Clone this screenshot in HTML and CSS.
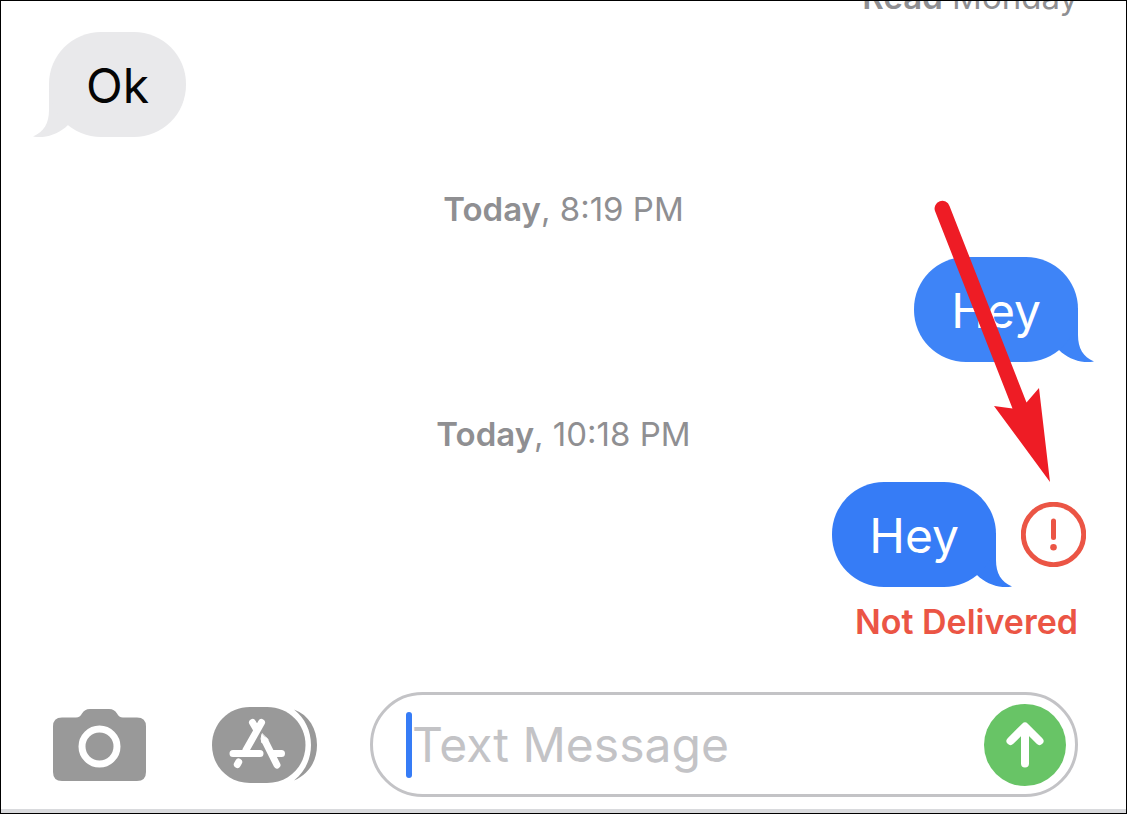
FILE: index.html
```html
<!DOCTYPE html>
<html lang="en">
<head>
<meta charset="utf-8">
<meta name="viewport" content="width=device-width, initial-scale=1">
<title>Messages</title>
<link rel="stylesheet" href="styles.css">
</head>
<body>
<div class="screen">
  <main class="thread">
    <p class="receipt"><strong>Read</strong> Monday</p>

    <div class="message message-received">
      <div class="bubble">Ok
        <svg class="tail" viewBox="0 0 46 54" aria-hidden="true"><path d="M16 0V27C16 40 11 49 0 53.500C12 56 26 51 35 42L46 30V0Z"/></svg>
      </div>
    </div>

    <p class="timestamp"><strong>Today</strong>, 8:19 PM</p>

    <div class="message message-sent">
      <div class="bubble">Hey
        <svg class="tail" viewBox="0 0 46 54" aria-hidden="true"><path d="M30 0V27C30 40 35 49 46 53.500C34 56 20 51 11 42L0 30V0Z"/></svg>
      </div>
    </div>

    <p class="timestamp"><strong>Today</strong>, 10:18 PM</p>

    <div class="message message-sent message-failed">
      <div class="bubble">Hey
        <svg class="tail" viewBox="0 0 46 54" aria-hidden="true"><path d="M30 0V27C30 40 35 49 46 53.500C34 56 20 51 11 42L0 30V0Z"/></svg>
      </div>
      <button class="alert" type="button" aria-label="Message not delivered">
        <svg viewBox="0 0 65 65" aria-hidden="true"><circle cx="32.500" cy="32.500" r="30.200"/><path d="M32.500 19V35.500"/><circle class="dot" cx="32.500" cy="45.300" r="3.300"/></svg>
      </button>
      <svg class="pointer" viewBox="930 198 125 290" aria-hidden="true"><path d="M935 211A7.500 7.500 0 0 1 949.500 206L1026.500 402.500L1039 388L1050 482L994 406L1012.500 408.500Z"/></svg>
    </div>
    <p class="receipt receipt-error">Not Delivered</p>
  </main>

  <form class="composer">
    <button class="tool camera" type="button" aria-label="Camera">
      <svg viewBox="0 0 93 72" aria-hidden="true">
        <path d="M9 8.500H23C26 8.500 27.500 7 29 4.500C31 1.500 33 0 37 0H56C60 0 62 1.500 64 4.500C65.500 7 67 8.500 70 8.500H84Q93 8.500 93 17.500V63Q93 72 84 72H9Q0 72 0 63V17.500Q0 8.500 9 8.500Z"/>
        <circle cx="46.500" cy="37.500" r="17.500"/>
      </svg>
    </button>
    <button class="tool apps" type="button" aria-label="Apps">
      <svg viewBox="212 707 105 76" aria-hidden="true">
        <path d="M250 707H267C289 707 305.500 724 305.500 745S289 783 267 783H250C228 783 212 766 212 745S228 707 250 707Z"/>
        <path d="M294 709.500C309 715 317 729 317 745C317 761 309 774 294 780.500C305 772 311 759 311 745C311 731 305 718 294 709.500Z"/>
        <g class="glyph">
          <path d="M261.500 722.500L246 750M252.500 722.500L256 728.500M233 753.500H260M274 753.500H281.500M265 741L277 765M238.700 762L237.300 764.500"/>
          <path class="taper" d="M262 734Q260 739 262 743L268 740Z"/>
        </g>
      </svg>
    </button>
    <div class="field">
      <span class="caret"></span>
      <input class="entry" type="text" placeholder="Text Message" aria-label="Text Message">
      <button class="send" type="submit" aria-label="Send">
        <svg viewBox="0 0 82 82" aria-hidden="true"><path d="M41 59.500V24M26.500 37L41 22.500L55.500 37"/></svg>
      </button>
    </div>
  </form>
  <div class="drawer-edge"></div>
</div>
</body>
</html>
```
FILE: styles.css
```css
* {
  box-sizing: border-box;
}

body {
  margin: 0;
  background: #fff;
  color: #050505;
  font-family: Inter, "Liberation Sans", sans-serif;
}

p {
  margin: 0;
}

button {
  padding: 0;
  border: 0;
  background: none;
  cursor: pointer;
}

svg {
  display: block;
}

strong {
  font-weight: 600;
}

.screen {
  display: flex;
  flex-direction: column;
  height: 100vh;
  border: 1px solid #000;
  overflow: hidden;
}

.thread {
  flex: 1;
  min-height: 0;
  display: flex;
  flex-direction: column;
  justify-content: flex-end;
  padding: 0 48px 50px;
  overflow: hidden;
}

.timestamp,
.receipt {
  flex: none;
  color: #8f8f92;
  font-size: 33px;
  line-height: 40px;
}

.timestamp {
  margin: 52px 0 28px;
  text-align: center;
}

.receipt {
  text-align: right;
}

.receipt:first-child {
  margin-bottom: 15px;
}

.receipt-error {
  margin-top: 15px;
  color: #eb5545;
  font-size: 34px;
  font-weight: 600;
}

.message {
  flex: none;
  position: relative;
  display: flex;
  align-items: center;
}

.message-sent {
  justify-content: flex-end;
}

.message-failed {
  gap: 25px;
  margin-right: -8px;
}

.bubble {
  position: relative;
  padding: 24px 37px 21px;
  border-radius: 52px;
  background: #3e84f7;
  color: #fff;
  font-size: 48px;
  line-height: 60px;
}

.message-failed .bubble {
  background: #367cf6;
}

.message-received .bubble {
  background: #e9e9eb;
  color: #050505;
}

.tail {
  position: absolute;
  right: -16px;
  bottom: 0;
  width: 46px;
  height: 54px;
  z-index: -1;
  fill: #3e84f7;
}

.message-failed .tail {
  fill: #367cf6;
}

.message-received .tail {
  right: auto;
  left: -16px;
  fill: #e9e9eb;
}

.alert {
  width: 65px;
  height: 65px;
}

.alert svg {
  fill: none;
  stroke: #eb5545;
  stroke-width: 5;
  stroke-linecap: round;
}

.alert .dot {
  fill: #eb5545;
  stroke: none;
}

.pointer {
  position: absolute;
  right: 31px;
  bottom: 99px;
  width: 125px;
  height: 290px;
  fill: #ee1c25;
}

.composer {
  display: flex;
  align-items: center;
  padding: 0 48px 12px 52px;
}

.tool {
  flex: none;
  fill: #999;
}

.camera {
  width: 93px;
  margin-right: 66px;
}

.camera circle {
  fill: none;
  stroke: #fff;
  stroke-width: 7;
}

.apps {
  width: 105px;
  margin-right: 53px;
}

.glyph {
  fill: none;
  stroke: #fff;
  stroke-width: 7;
  stroke-linecap: round;
}

.glyph .taper {
  fill: #fff;
  stroke-width: 1;
}

.field {
  flex: 1;
  min-width: 0;
  display: flex;
  align-items: center;
  height: 105px;
  padding: 0 9px 0 33px;
  border: 3px solid #c3c3c6;
  border-radius: 53px;
}

.caret {
  flex: none;
  width: 6px;
  height: 66px;
  border-radius: 3px;
  background: #367cf6;
}

.entry {
  flex: 1;
  min-width: 0;
  height: 66px;
  padding: 0;
  border: 0;
  outline: 0;
  background: none;
  color: #050505;
  font: inherit;
  font-size: 48px;
}

.entry::placeholder {
  color: #c3c3c6;
  opacity: 1;
}

.send {
  flex: none;
  width: 82px;
  height: 82px;
  border-radius: 50%;
  background: #68c466;
}

.send svg {
  fill: none;
  stroke: #fff;
  stroke-width: 8;
  stroke-linecap: round;
  stroke-linejoin: round;
}

.drawer-edge {
  flex: none;
  height: 4px;
  background: #d9dadd;
}
```
